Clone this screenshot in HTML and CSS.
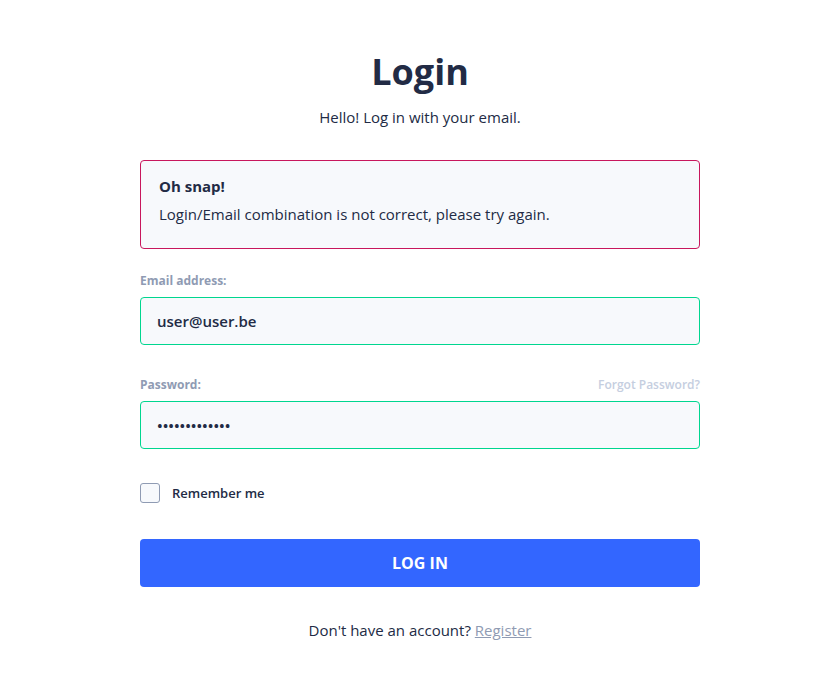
FILE: index.html
```html
<!DOCTYPE html>
<html lang="en">
<head>
<meta charset="utf-8">
<title>Login</title>
<link rel="stylesheet" href="styles.css">
</head>
<body>
<main class="auth">
  <h1 class="title">Login</h1>
  <p class="sub-title">Hello! Log in with your email.</p>

  <div class="alert" role="alert">
    <p class="alert-title"><b>Oh snap!</b></p>
    <ul class="alert-list">
      <li>Login/Email combination is not correct, please try again.</li>
    </ul>
  </div>

  <form class="form">
    <div class="group">
      <label class="label" for="email">Email address:</label>
      <input class="input" id="email" type="email" value="user@user.be">
    </div>

    <div class="group group-pw">
      <div class="label-row">
        <label class="label" for="pw">Password:</label>
        <a class="forgot" href="#">Forgot Password?</a>
      </div>
      <input class="input" id="pw" type="password" value="passwordpass1">
    </div>

    <label class="check">
      <span class="box"></span>
      <span class="check-text">Remember me</span>
    </label>

    <button class="btn" type="button">Log In</button>
  </form>

  <p class="another">Don't have an account? <a href="#" class="link">Register</a></p>
</main>
</body>
</html>
```

FILE: styles.css
```css
* { box-sizing: border-box; }
html, body { margin: 0; padding: 0; background: #ffffff; }
body {
  font-family: "Open Sans", "Noto Sans", sans-serif;
  color: #222b45;
}
.auth {
  width: 560px;
  margin-left: 140px;
  padding-top: 48px;
}
.title {
  margin: 0;
  text-align: center;
  font-size: 36px;
  line-height: 48px;
  font-weight: 700;
  color: #222b45;
}
.sub-title {
  margin: 11px 0 0;
  text-align: center;
  font-size: 15px;
  line-height: 20px;
}
.alert {
  margin-top: 33px;
  border: 1px solid #c8175d;
  border-radius: 4px;
  background: #f7f9fc;
  padding: 15px 18px 24px;
  font-size: 15px;
  line-height: 20px;
}
.alert-title { margin: 0 0 8px; }
.alert-title b { font-weight: 700; }
.alert-list { list-style: none; margin: 0; padding: 0; }
.form { margin-top: 24px; }
.group { margin-bottom: 32px; }
.group-pw { margin-bottom: 34px; }
.label-row {
  display: flex;
  justify-content: space-between;
  align-items: baseline;
}
.label {
  display: block;
  font-size: 12px;
  line-height: 16px;
  font-weight: 700;
  color: #8f9bb3;
  margin-bottom: 8px;
}
.forgot {
  font-size: 12px;
  line-height: 16px;
  font-weight: 600;
  color: #c5cee0;
  text-decoration: none;
}
.input {
  display: block;
  width: 100%;
  height: 48px;
  border: 1px solid #00d68f;
  border-radius: 4px;
  background: #f7f9fc;
  padding: 11px 16px;
  font-family: inherit;
  font-size: 15px;
  line-height: 24px;
  font-weight: 600;
  color: #222b45;
  outline: none;
}
.check {
  display: flex;
  align-items: center;
  gap: 12px;
  height: 20px;
}
.box {
  width: 20px;
  height: 20px;
  border: 1px solid #8f9bb3;
  border-radius: 3px;
  background: #f7f9fc;
}
.check-text {
  font-size: 13px;
  line-height: 20px;
  font-weight: 600;
  color: #222b45;
}
.btn {
  display: block;
  width: 100%;
  height: 48px;
  margin-top: 36px;
  border: none;
  border-radius: 4px;
  background: #3366ff;
  color: #ffffff;
  font-family: inherit;
  font-size: 16px;
  line-height: 24px;
  font-weight: 700;
  text-transform: uppercase;
}
.another {
  margin: 33px 0 0;
  text-align: center;
  font-size: 15px;
  line-height: 20px;
  color: #222b45;
}
.link {
  color: #8f9bb3;
  text-decoration: underline;
}
```
